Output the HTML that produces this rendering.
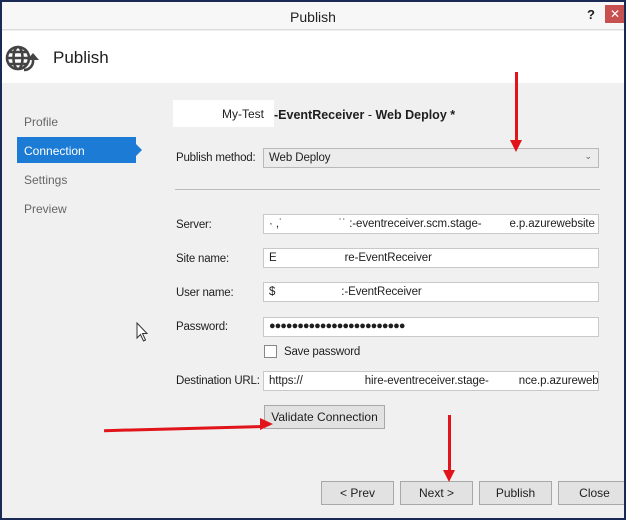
<!DOCTYPE html>
<html><head><meta charset="utf-8"><style>
*{box-sizing:border-box;margin:0;padding:0}
body{width:626px;height:520px;overflow:hidden;font-family:"Liberation Sans",sans-serif;font-size:12px;color:#1e1e1e;background:#f0f0f0;position:relative}
.frame{position:absolute;left:0;top:0;width:626px;height:520px;border:2px solid #1b2a55}
.title{position:absolute;left:2px;top:2px;width:622px;height:28px;background:#f7f7f7;border-bottom:1px solid #dcdcdc}
.title .t{position:absolute;left:0;right:0;top:7px;text-align:center;font-size:14px;color:#222}
.title .q{position:absolute;left:585px;top:5px;font-weight:bold;font-size:13px}
.title .x{position:absolute;left:603px;top:3px;width:21px;height:18px;background:#c75050;color:#fff;font-size:12px;padding-left:5px;line-height:18px}
.hdr{position:absolute;left:2px;top:31px;width:622px;height:52px;background:#fff}
.hdr .h{position:absolute;left:51px;top:17px;font-size:17px;color:#1e1e1e}
.nav div{position:absolute;left:24px;font-size:12px;color:#666}
.sel{position:absolute;left:17px;top:137px;width:119px;height:26px;background:#1c7cd5}
.sel:after{content:"";position:absolute;right:-6px;top:7px;border-left:6px solid #1c7cd5;border-top:6px solid transparent;border-bottom:6px solid transparent}
.lbl{position:absolute;left:176px;font-size:11.5px;letter-spacing:-0.2px}
.in{position:absolute;left:263px;width:336px;height:20px;background:#fff;border:1px solid #c8c8c8;font-size:11.5px;padding:3px 0 0 5px;white-space:nowrap;overflow:hidden;letter-spacing:-0.1px}
.in i{display:inline-block}
.btn{position:absolute;height:24px;background:#e2e2e2;border:1px solid #a8a8a8;font-size:12px;text-align:center;line-height:22px}
.arr{position:absolute;background:#e0141a}
</style></head><body>
<div class="title"><div class="t">Publish</div><div class="q">?</div><div class="x">✕</div></div>
<div class="hdr">
<svg style="position:absolute;left:3px;top:11px" width="34" height="32" viewBox="0 0 34 32"><g fill="none" stroke="#444" stroke-width="2.6"><circle cx="13" cy="16" r="11"/><ellipse cx="13" cy="16" rx="4.5" ry="11"/><line x1="2" y1="16" x2="24" y2="16"/><line x1="4" y1="10" x2="22" y2="10"/><line x1="4" y1="22" x2="22" y2="22"/><path d="M19 28 A9 9 0 0 0 28 18"/></g><path d="M22 18 L28 11 L34 18Z" fill="#444"/></svg>
<div class="h">Publish</div></div>
<div class="sel"></div>
<div class="nav"><div style="top:115px">Profile</div><div style="top:144px;color:#fff">Connection</div><div style="top:173px">Settings</div><div style="top:202px">Preview</div></div>
<div style="position:absolute;left:173px;top:100px;width:101px;height:27px;background:#fff;font-size:12px;padding:7px 0 0 49px">My-Test</div>
<div style="position:absolute;left:274px;top:108px;font-weight:bold;font-size:12.5px">-EventReceiver <span style="font-weight:normal">-</span> Web Deploy *</div>
<div class="lbl" style="top:152px">Publish method:</div>
<div class="in" style="top:148px;height:20px;background:#ececec;border-color:#b9b9b9">Web Deploy<span style="position:absolute;right:6px;top:2px;font-size:9px;color:#666">⌄</span></div>
<div style="position:absolute;left:175px;top:189px;width:425px;height:1px;background:#bbb"></div>
<div class="lbl" style="top:219px">Server:</div><div class="in" style="top:214px">· ,˙<i style="width:56px"></i>˙˙ :-eventreceiver.scm.stage-<i style="width:28px"></i>e.p.azurewebsite</div>
<div class="lbl" style="top:253px">Site name:</div><div class="in" style="top:248px">E<i style="width:68px"></i>re-EventReceiver</div>
<div class="lbl" style="top:287px">User name:</div><div class="in" style="top:282px">$<i style="width:66px"></i>:-EventReceiver</div>
<div class="lbl" style="top:321px">Password:</div><div class="in" style="top:317px;font-size:11px;letter-spacing:-1px;padding-top:2px">●●●●●●●●●●●●●●●●●●●●●●●●</div>
<div style="position:absolute;left:264px;top:345px;width:13px;height:13px;background:#fff;border:1px solid #888"></div>
<div class="lbl" style="left:284px;top:346px">Save password</div>
<div class="lbl" style="top:375px">Destination URL:</div><div class="in" style="top:371px">https://<i style="width:62px"></i>hire-eventreceiver.stage-<i style="width:8px"></i><i style="width:22px"></i>nce.p.azurewebs</div>
<div class="btn" style="left:264px;top:405px;width:121px">Validate Connection</div>
<div class="btn" style="left:321px;top:481px;width:73px">&lt; Prev</div>
<div class="btn" style="left:400px;top:481px;width:73px">Next &gt;</div>
<div class="btn" style="left:479px;top:481px;width:73px">Publish</div>
<div class="btn" style="left:558px;top:481px;width:73px">Close</div>
<div class="arr" style="left:515px;top:72px;width:3px;height:72px"></div>
<div style="position:absolute;left:510px;top:140px;border-top:12px solid #e0141a;border-left:6px solid transparent;border-right:6px solid transparent"></div>
<div class="arr" style="left:104px;top:425px;width:160px;height:3px;transform:rotate(-1.5deg);transform-origin:right center"></div>
<div style="position:absolute;left:260px;top:418px;border-left:13px solid #e0141a;border-top:6px solid transparent;border-bottom:6px solid transparent"></div>
<div class="arr" style="left:448px;top:415px;width:3px;height:58px"></div>
<div style="position:absolute;left:443px;top:470px;border-top:12px solid #e0141a;border-left:6px solid transparent;border-right:6px solid transparent"></div>
<svg style="position:absolute;left:136px;top:322px" width="14" height="20" viewBox="0 0 14 20"><path d="M1 1 L1 16 L4.5 12.5 L7.5 19 L9.5 18 L6.5 11.5 L11 11.5 Z" fill="#fff" stroke="#333" stroke-width="1"/></svg>
<div class="frame"></div>
</body></html>
